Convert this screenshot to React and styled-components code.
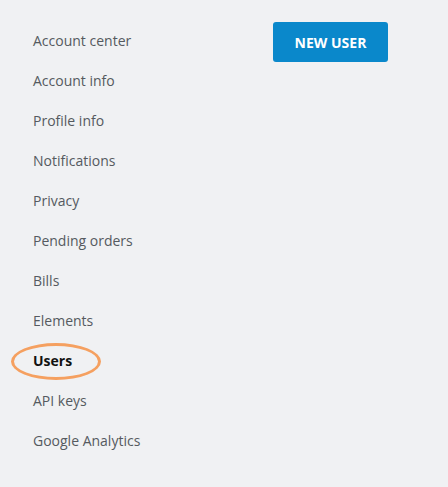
import React from "react"
import styled, { createGlobalStyle } from "styled-components"

const GlobalStyle = createGlobalStyle`
    html, body {
        margin: 0;
        padding: 0;
        background: #f0f1f3;
    }
    body {
        font-family: "Open Sans", "Liberation Sans", sans-serif;
    }
`

const items = [
    "Account center",
    "Account info",
    "Profile info",
    "Notifications",
    "Privacy",
    "Pending orders",
    "Bills",
    "Elements",
    "Users",
    "API keys",
    "Google Analytics",
]

export default function App() {
    return (
        <>
            <GlobalStyle />
            <Page>
                <Sidebar>
                    {items.map((label) => (
                        <NavItem key={label} $active={label === "Users"}>
                            {label}
                            {label === "Users" && <Circle />}
                        </NavItem>
                    ))}
                </Sidebar>
                <Main>
                    <Button>NEW USER</Button>
                </Main>
            </Page>
        </>
    )
}

const Page = styled.div`
    display: flex;
    width: 448px;
    height: 487px;
    background: #f0f1f3;
`

const Sidebar = styled.nav`
    width: 240px;
    padding: 21px 0 0 33px;
    box-sizing: border-box;
    display: flex;
    flex-direction: column;
`

const NavItem = styled.a`
    position: relative;
    align-self: flex-start;
    height: 40px;
    line-height: 40px;
    font-size: 14px;
    color: ${(p) => (p.$active ? "#111" : "#555a60")};
    font-weight: ${(p) => (p.$active ? 700 : 400)};
    cursor: pointer;
`

const Circle = styled.span`
    position: absolute;
    left: -22px;
    top: 2px;
    width: 84px;
    height: 31px;
    border: 3px solid #f5a060;
    border-radius: 50%;
    pointer-events: none;
`

const Main = styled.div`
    padding: 22px 0 0 33px;
`

const Button = styled.button`
    width: 115px;
    height: 40px;
    border: none;
    border-radius: 3px;
    background: #0a88cb;
    color: #fff;
    font-family: "Open Sans", "Liberation Sans", sans-serif;
    font-weight: 700;
    font-size: 14px;
    cursor: pointer;
`
